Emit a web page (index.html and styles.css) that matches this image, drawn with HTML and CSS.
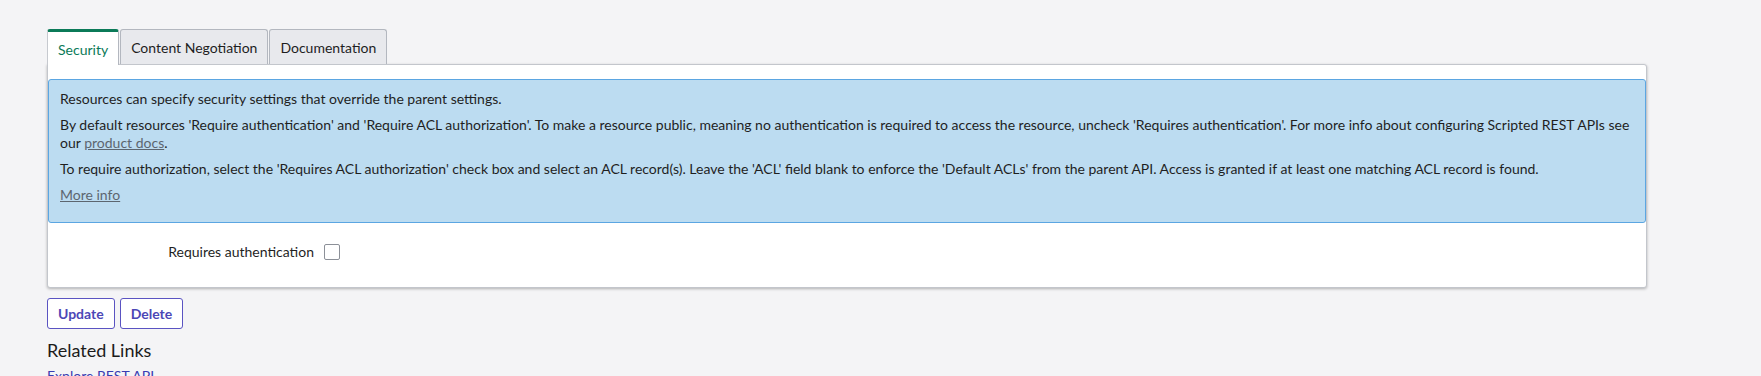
FILE: index.html
```html
<!DOCTYPE html>
<html>
<head>
<meta charset="utf-8">
<link rel="stylesheet" href="styles.css">
</head>
<body>
<div class="page">
  <div class="tabs">
    <div class="tab active">Security</div>
    <div class="tab">Content Negotiation</div>
    <div class="tab">Documentation</div>
  </div>
  <div class="panel">
    <div class="info">
      <p>Resources can specify security settings that override the parent settings.</p>
      <p>By default resources 'Require authentication' and 'Require ACL authorization'. To make a resource public, meaning no authentication is required to access the resource, uncheck 'Requires authentication'. For more info about configuring Scripted REST APIs see our <a class="muted" href="#">product docs</a>.</p>
      <p>To require authorization, select the 'Requires ACL authorization' check box and select an ACL record(s). Leave the 'ACL' field blank to enforce the 'Default ACLs' from the parent API. Access is granted if at least one matching ACL record is found.</p>
      <p><a class="muted" href="#">More info</a></p>
    </div>
    <div class="row">
      <label class="label">Requires authentication</label>
      <span class="checkbox"></span>
    </div>
  </div>
  <div class="actions">
    <button class="btn">Update</button>
    <button class="btn">Delete</button>
  </div>
  <h2 class="related">Related Links</h2>
  <a class="link" href="#">Explore REST API</a>
</div>
</body>
</html>
```

FILE: styles.css
```css
html, body {
  margin: 0;
  padding: 0;
  background: #f4f4f6;
  font-family: Lato, "Noto Sans", sans-serif;
  color: #2e2e2e;
}
.page {
  padding: 29px 0 0 47px;
  width: 1600px;
}
.tabs {
  display: flex;
  align-items: flex-end;
  gap: 1px;
  position: relative;
  z-index: 1;
}
.tab {
  box-sizing: border-box;
  height: 35px;
  padding: 0 10px;
  display: flex;
  align-items: center;
  font-size: 14px;
  color: #1e1e1e;
  background: #e8e9ed;
  border: 1px solid #b3b7bf;
  border-bottom: none;
  border-radius: 3px 3px 0 0;
}
.tab.active {
  background: #fff;
  color: #0b7a58;
  border-top: 3px solid #0b7a58;
  border-left-color: #c6c9cf;
  height: 36px;
  margin-bottom: -1px;
  padding-top: 1px;
}
.panel {
  background: #fff;
  border: 1px solid #c3c6cc;
  border-radius: 0 3px 3px 3px;
  box-shadow: 0 1px 3px rgba(0, 0, 0, 0.28);
  padding-top: 14px;
}
.info {
  background: #bcdcf1;
  border: 1px solid #5ba6e2;
  border-radius: 3px;
  padding: 10px 11px 10px;
  font-size: 14px;
  line-height: 18px;
  color: #1f1f1f;
}
.info p {
  margin: 0 0 8px;
}
.muted {
  color: #5c6670;
  text-decoration: underline;
}
.row {
  display: flex;
  align-items: center;
  padding: 21px 0 27px;
  line-height: 16px;
}
.label {
  width: 266px;
  text-align: right;
  font-size: 14px;
  color: #1f1f1f;
  margin-right: 10px;
}
.checkbox {
  box-sizing: border-box;
  width: 16px;
  height: 16px;
  border: 1px solid #8c9098;
  border-radius: 2px;
  background: #fff;
}
.actions {
  display: flex;
  gap: 5px;
  margin-top: 10px;
}
.btn {
  box-sizing: border-box;
  height: 31px;
  padding: 0 10px;
  font-family: Lato, "Noto Sans", sans-serif;
  font-size: 14px;
  font-weight: bold;
  color: #4c47b6;
  background: #fff;
  border: 1px solid #5a53c2;
  border-radius: 3px;
}
.related {
  margin: 10px 0 4px;
  font-size: 18px;
  font-weight: normal;
  line-height: 22px;
  color: #1b1b1b;
}
.link {
  font-size: 14px;
  line-height: 17px;
  color: #3a3db2;
  text-decoration: none;
}
```
